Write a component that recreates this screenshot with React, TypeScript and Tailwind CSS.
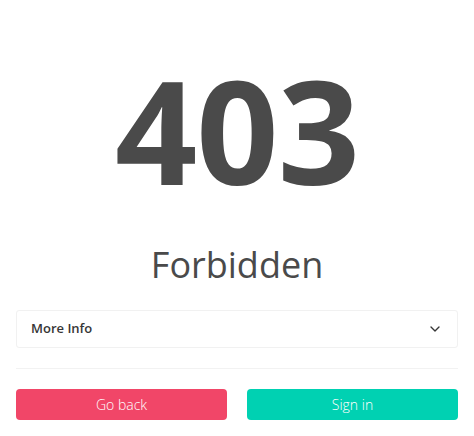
import { ChevronDown } from 'lucide-react'

export default function App() {
  return (
    <div className="min-h-[436px] w-[474px] bg-white px-4 pt-[54px] font-['Open_Sans',sans-serif] text-[#4a4a4a]">
      <div className="text-center">
        <h1 className="text-[144px] font-bold leading-[150px] tracking-[-1px] text-[#4a4a4a]">403</h1>
        <p className="mt-[41px] text-[36px] font-normal leading-[40px] text-[#4a4a4a]">Forbidden</p>
      </div>
      <div className="mt-[25px] flex h-[38px] items-center justify-between rounded-[3px] border border-[#f1f1f1] px-[14px]">
        <span className="text-[13px] font-semibold text-[#363636]">More Info</span>
        <ChevronDown size={16} strokeWidth={2} className="text-[#363636]" />
      </div>
      <div className="mt-5 h-px bg-[#f2f2f2]" />
      <div className="mt-5 grid grid-cols-2 gap-5">
        <button className="h-[31px] rounded-[4px] bg-[#f14668] text-[14px] font-light text-white">Go back</button>
        <button className="h-[31px] rounded-[4px] bg-[#00d1b2] text-[14px] font-light text-white">Sign in</button>
      </div>
    </div>
  )
}
